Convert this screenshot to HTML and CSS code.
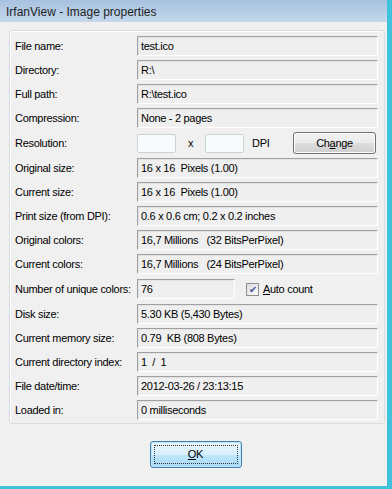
FILE: index.html
```html
<!DOCTYPE html>
<html lang="en">
<head>
  <meta charset="UTF-8" />
  <title>IrfanView - Image properties</title>
  <link rel="stylesheet" href="styles.css">
</head>
<body>
  <div class="window">
    <div class="titlebar">IrfanView - Image properties</div>

    <div class="client">
      <div class="group">
        <div class="label">File name:</div>
        <div class="value">test.ico</div>

        <div class="label">Directory:</div>
        <div class="value">R:\</div>

        <div class="label">Full path:</div>
        <div class="value">R:\test.ico</div>

        <div class="label">Compression:</div>
        <div class="value">None - 2 pages</div>

        <div class="label tall">Resolution:</div>
        <div class="res-row">
          <input class="edit" type="text">
          <span class="times">x</span>
          <input class="edit" type="text">
          <span class="dpi">DPI</span>
          <button class="btn">Ch<u>a</u>nge</button>
        </div>

        <div class="label">Original size:</div>
        <div class="value">16 x 16&nbsp; Pixels (1.00)</div>

        <div class="label">Current size:</div>
        <div class="value">16 x 16&nbsp; Pixels (1.00)</div>

        <div class="label">Print size (from DPI):</div>
        <div class="value">0.6 x 0.6 cm; 0.2 x 0.2 inches</div>

        <div class="label">Original colors:</div>
        <div class="value">16,7 Millions&nbsp;&nbsp; (32 BitsPerPixel)</div>

        <div class="label">Current colors:</div>
        <div class="value">16,7 Millions&nbsp;&nbsp; (24 BitsPerPixel)</div>

        <div class="label tall">Number of unique colors:</div>
        <div class="count-row">
          <div class="value short">76</div>
          <label class="check"><span class="box">&#10004;</span><u>A</u>uto count</label>
        </div>

        <div class="label">Disk size:</div>
        <div class="value">5.30 KB (5,430 Bytes)</div>

        <div class="label">Current memory size:</div>
        <div class="value">0.79&nbsp; KB (808 Bytes)</div>

        <div class="label">Current directory index:</div>
        <div class="value">1&nbsp; /&nbsp; 1</div>

        <div class="label">File date/time:</div>
        <div class="value">2012-03-26 / 23:13:15</div>

        <div class="label">Loaded in:</div>
        <div class="value">0 milliseconds</div>
      </div>

      <div class="actions">
        <button class="ok"><span class="focus"><u>O</u>K</span></button>
      </div>
    </div>
  </div>
</body>
</html>
```

FILE: styles.css
```css
body {
  margin: 0;
  font-family: 'Liberation Sans', Arial, sans-serif;
  font-size: 11px;
  letter-spacing: -0.3px;
  color: #000;
  background: #f0f0f0;
}
.window {
  width: 392px;
  height: 489px;
  box-sizing: border-box;
  border-right: 5px solid #3fc3dc;
  border-bottom: 3px solid #3fc3dc;
  background: #f0f0f0;
  display: flex;
  flex-direction: column;
}
.titlebar {
  height: 22px;
  line-height: 24px;
  padding-left: 6px;
  font-size: 12px;
  letter-spacing: 0;
  color: #1e1e1e;
  background: linear-gradient(#a7c2df, #c4d8ec);
}
.client {
  flex: 1;
  padding: 8px 2px 0 9px;
}
.group {
  border: 1px solid #d5dfe5;
  box-shadow: inset 1px 1px 0 #fff;
  border-radius: 3px;
  padding: 5px 6px 3px 5px;
  display: grid;
  grid-template-columns: 122px 1fr;
  grid-auto-rows: minmax(20px, auto);
  row-gap: 4px;
}
.label {
  line-height: 20px;
}
.label.tall {
  line-height: 22px;
}
.value {
  height: 20px;
  box-sizing: border-box;
  line-height: 18px;
  padding-left: 3px;
  border: 1px solid;
  border-color: #a0a0a0 #fff #fff #a0a0a0;
  box-shadow: inset 1px 1px 0 #e3e3e3;
  background: #efefef;
  white-space: nowrap;
  overflow: hidden;
}
.res-row {
  display: flex;
  align-items: center;
  height: 22px;
}
.edit {
  width: 39px;
  height: 19px;
  box-sizing: border-box;
  margin: 0;
  padding: 0;
  border: 1px solid #c9d2d6;
  border-radius: 2px;
  background: #f7fbfb;
}
.times {
  width: 29px;
  text-align: center;
}
.dpi {
  margin-left: 8px;
  width: 41px;
}
.btn {
  width: 83px;
  height: 22px;
  margin: 0;
  font: inherit;
  letter-spacing: inherit;
  color: #000;
  border: 1px solid #707070;
  border-radius: 3px;
  background: linear-gradient(#f2f2f2 0%, #ebebeb 50%, #dddddd 51%, #cfcfcf 100%);
  box-shadow: inset 0 0 0 1px #fcfcfc;
}
.count-row {
  display: flex;
  align-items: center;
  height: 22px;
}
.short {
  width: 98px;
}
.check {
  display: flex;
  align-items: center;
  margin-left: 11px;
}
.box {
  width: 11px;
  height: 11px;
  margin-right: 4px;
  border: 1px solid #8f8f8f;
  background: linear-gradient(135deg, #dcdcdc, #fbfbfb);
  color: #3d5a9c;
  font-size: 10px;
  line-height: 11px;
  text-align: center;
  letter-spacing: 0;
}
.actions {
  display: flex;
  justify-content: center;
  padding-top: 17px;
  padding-right: 3px;
}
.ok {
  width: 92px;
  height: 27px;
  padding: 3px;
  font: inherit;
  letter-spacing: inherit;
  color: #000;
  border: 1px solid #3c7fb1;
  border-radius: 3px;
  background: linear-gradient(#eaf6fd 0%, #d9f0fc 50%, #bee6fd 51%, #a7d9f5 100%);
  box-shadow: inset 0 0 0 1px #c4e5f6;
}
.focus {
  display: block;
  height: 100%;
  box-sizing: border-box;
  border: 1px dotted #333;
  line-height: 17px;
  text-align: center;
}
```
